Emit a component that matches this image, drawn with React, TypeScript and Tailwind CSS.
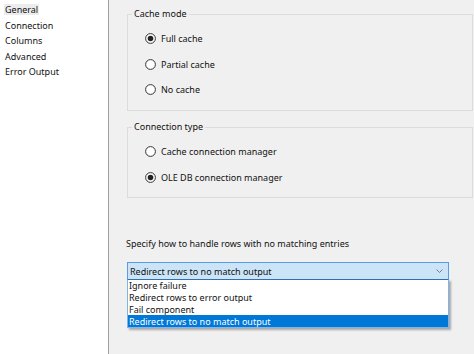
import { useState } from "react"

const navItems = ["General", "Connection", "Columns", "Advanced", "Error Output"]

const options = [
  "Ignore failure",
  "Redirect rows to error output",
  "Fail component",
  "Redirect rows to no match output",
]

function Radio({ checked, label }: { checked?: boolean; label: string }) {
  return (
    <div className="flex h-[25.5px] items-center gap-[5px]">
      <svg width="11" height="11" viewBox="0 0 11 11" className="shrink-0">
        <circle cx="5.5" cy="5.5" r="4.9" fill="#fff" stroke="#333" strokeWidth="1" />
        {checked ? <circle cx="5.5" cy="5.5" r="2.8" fill="#222" /> : null}
      </svg>
      <span>{label}</span>
    </div>
  )
}

function GroupBox({ title, className, children }: { title: string; className?: string; children: React.ReactNode }) {
  return (
    <div className={"relative border border-[#dcdcdc] pl-[17px] pt-[11px] " + (className ?? "")}>
      <span className="absolute left-[4px] top-[-7px] bg-[#f0f0f0] px-[2px] leading-[12px]">{title}</span>
      {children}
    </div>
  )
}

function App() {
  const [selected] = useState(3)

  return (
    <div className="flex h-[354px] w-[474px] overflow-hidden bg-white text-[9px] leading-none text-[#111] [font-family:'Noto_Sans',sans-serif]">
      {/* left navigation */}
      <nav className="w-[109px] shrink-0 border-r border-[#a0a0a0] bg-white pt-[2px] pl-[4px]">
        {navItems.map((item, i) => (
          <div key={item} className="flex h-[15.5px] items-center">
            <span className={i === 0 ? "bg-[#ececec] px-[1px] py-[1px]" : "px-[1px] py-[1px]"}>{item}</span>
          </div>
        ))}
      </nav>

      {/* settings pane */}
      <main className="flex-1 bg-[#f0f0f0] pl-[18px] pr-[1px] pt-[14px]">
        <GroupBox title="Cache mode" className="h-[97px]">
          <Radio checked label="Full cache" />
          <Radio label="Partial cache" />
          <Radio label="No cache" />
        </GroupBox>

        <GroupBox title="Connection type" className="mt-[16px] h-[71px]">
          <Radio label="Cache connection manager" />
          <Radio checked label="OLE DB connection manager" />
        </GroupBox>

        <p className="mt-[40px] -ml-[1px] leading-[12px]">Specify how to handle rows with no matching entries</p>

        <div className="relative mt-[12px] w-[322px]">
          <div className="flex h-[18px] items-center justify-between border border-[#569de5] bg-[#cce4f7] pl-[2px] pr-[5px]">
            <span>{options[selected]}</span>
            <svg width="7" height="4" viewBox="0 0 7 4">
              <path d="M0.5 0.5 L3.5 3.5 L6.5 0.5" fill="none" stroke="#7a7a7a" strokeWidth="1" />
            </svg>
          </div>
          <ul className="absolute left-0 top-[17px] w-[322px] border border-[#7eb4ea] border-t-[#2f6fb3] bg-white shadow-[2px_2px_2px_rgba(0,0,0,0.3)]">
            {options.map((opt, i) => (
              <li
                key={opt}
                className={
                  i === selected
                    ? "flex h-[11.75px] items-center bg-[#0078d7] pl-[1px] text-white"
                    : "flex h-[11.75px] items-center pl-[1px]"
                }
              >
                {opt}
              </li>
            ))}
          </ul>
        </div>
      </main>
    </div>
  )
}

export default App
